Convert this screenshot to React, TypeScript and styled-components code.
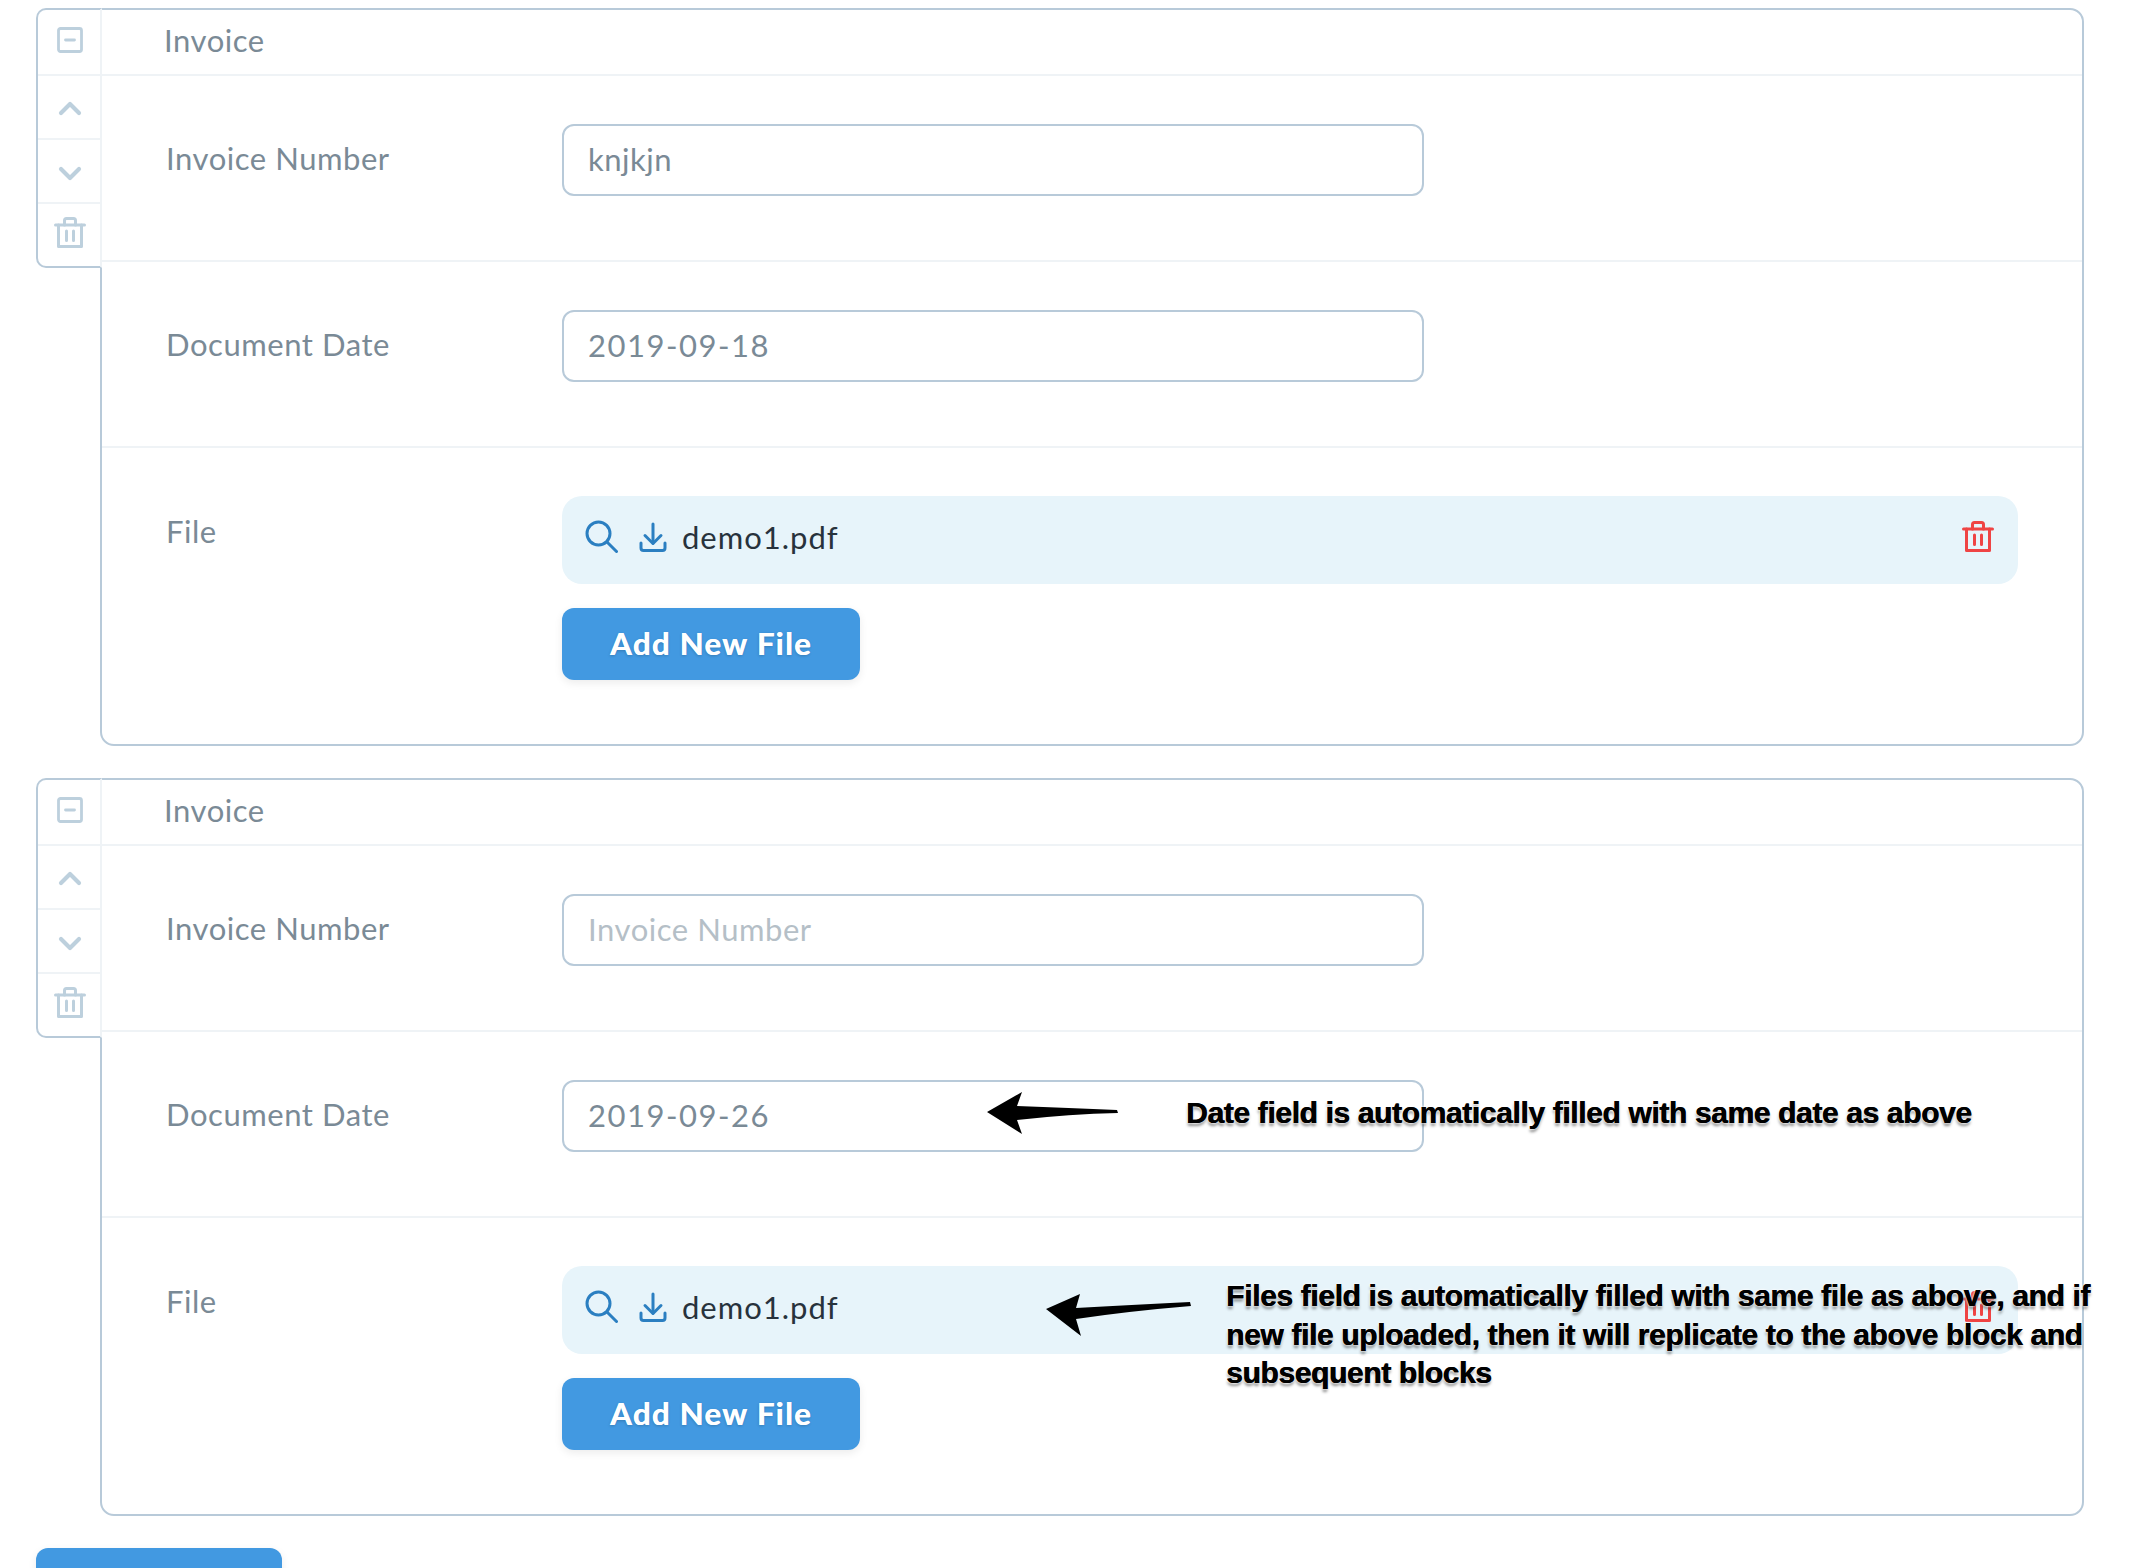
import React from "react";
import styled, { createGlobalStyle } from "styled-components";

const Global = createGlobalStyle`
  html, body { margin: 0; padding: 0; background: #fff; height: 100%; overflow: hidden; }
  body { font-family: "Lato", "Open Sans", sans-serif; }
`;

const Page = styled.div`
  position: relative;
  width: 2132px;
  height: 1568px;
  overflow: hidden;
  box-sizing: border-box;
  padding: 8px 48px 0 36px;
  display: flex;
  flex-direction: column;
  gap: 32px;
`;

const Block = styled.section`
  display: flex;
  align-items: flex-start;
  height: 738px;
`;

const Sidebar = styled.aside`
  position: relative;
  z-index: 1;
  flex: none;
  width: 66px;
  height: 260px;
  margin-right: -2px;
  box-sizing: border-box;
  background: #fff;
  border: 2px solid #b8cad9;
  border-right-color: #eff3f6;
  border-radius: 10px 0 0 10px;
  display: flex;
  flex-direction: column;
`;

const SideCell = styled.button<{ $h: number; $up?: number; $down?: number; $last?: boolean }>`
  height: ${(p) => p.$h}px;
  flex: none;
  box-sizing: border-box;
  padding: ${(p) => p.$down ?? 0}px 0 ${(p) => p.$up ?? 0}px 2px;
  background: none;
  border: 0;
  border-bottom: ${(p) => (p.$last ? "0" : "2px solid #eff3f6")};
  display: flex;
  align-items: center;
  justify-content: center;
  color: #bdd0dd;
`;

const Panel = styled.div`
  flex: 1;
  height: 738px;
  box-sizing: border-box;
  border: 2px solid #b8cad9;
  border-radius: 0 14px 14px 14px;
  display: flex;
  flex-direction: column;
`;

const Header = styled.div`
  height: 66px;
  flex: none;
  box-sizing: border-box;
  border-bottom: 2px solid #eff3f6;
  padding: 0 0 4px 62px;
  display: flex;
  align-items: center;
  font-size: 31px;
  letter-spacing: 0.55px;
  color: #7a8a96;
`;

const Row = styled.div<{ $last?: boolean }>`
  display: flex;
  box-sizing: border-box;
  height: ${(p) => (p.$last ? "auto" : "186px")};
  flex: ${(p) => (p.$last ? "1" : "none")};
  padding: 48px 64px 0 64px;
  border-bottom: ${(p) => (p.$last ? "0" : "2px solid #eff3f6")};
`;

const Label = styled.label`
  flex: none;
  width: 396px;
  height: 68px;
  line-height: 68px;
  font-size: 31px;
  color: #7a8a96;
  letter-spacing: 0.55px;
`;

const FileLabel = styled(Label)`
  height: 70px;
  line-height: 70px;
`;

const TextInput = styled.input<{ $tracking: number }>`
  width: 862px;
  height: 72px;
  box-sizing: border-box;
  padding: 0 24px 3px;
  background: #fff;
  border: 2px solid #b8cad9;
  border-radius: 12px;
  font: 400 31px "Lato", sans-serif;
  letter-spacing: ${(p) => p.$tracking}px;
  color: #7a8a96;
  outline: none;
  &::placeholder { color: #b5bfc7; opacity: 1; letter-spacing: 0.55px; }
`;

const FileColumn = styled.div`
  flex: 1;
  display: flex;
  flex-direction: column;
  align-items: flex-start;
  gap: 24px;
`;

const FileItem = styled.div`
  align-self: stretch;
  height: 88px;
  box-sizing: border-box;
  padding: 0 24px 7px 23px;
  background: #e7f4fa;
  border-radius: 20px;
  display: flex;
  align-items: center;
  color: #2b7fc1;
`;

const FileName = styled.span`
  margin-left: 15px;
  font-size: 31px;
  color: #27323c;
  letter-spacing: 1px;
`;

const DeleteIcon = styled.span`
  margin-left: auto;
  display: flex;
  color: #ef4444;
`;

const SpacedIcon = styled.span`
  margin-left: 21px;
  display: flex;
`;

const PrimaryButton = styled.button`
  width: 298px;
  height: 72px;
  padding: 0 0 3px;
  background: #4299e1;
  border: 0;
  border-radius: 12px;
  box-shadow: 0 3px 8px rgba(0, 0, 0, 0.08);
  font: 700 31px "Lato", sans-serif;
  letter-spacing: 1.4px;
  color: #fff;
  text-shadow: 0.5px 0 0 #fff, 0 1px 3px rgba(0, 0, 0, 0.2);
`;

const AddBlock = styled(PrimaryButton)`
  flex: none;
  width: 246px;
`;

const Note = styled.p<{ $x: number; $y: number }>`
  position: absolute;
  z-index: 2;
  left: ${(p) => p.$x}px;
  top: ${(p) => p.$y}px;
  margin: 0;
  white-space: pre;
  font: 700 30px/38.5px "Liberation Sans", Arial, sans-serif;
  letter-spacing: -0.37px;
  color: #000;
  text-shadow: 0.6px 0 0 #000, 0 0 3px #fff, 0 0 2px #fff, 0 3px 3px rgba(0, 0, 0, 0.45);
`;

const ArrowMark = styled.svg`
  position: absolute;
  z-index: 2;
  left: 0;
  top: 0;
  pointer-events: none;
`;

const Trash = ({ size = 32 }: { size?: number }) => (
  <svg width={size} height={size} viewBox="0 0 32 32" fill="none" stroke="currentColor" strokeWidth="3" strokeLinecap="round" strokeLinejoin="round">
    <path d="M1.5 8h29" />
    <path d="M4.5 8v21.5h23V8" />
    <path d="M10.5 8V3.5q0-2 2-2h7q2 0 2 2V8" />
    <path d="M12.5 14v9.5M19.5 14v9.5" />
  </svg>
);

const MinusSquare = () => (
  <svg width="26" height="26" viewBox="0 0 26 26" fill="none" stroke="currentColor" strokeWidth="2.8" strokeLinecap="round" strokeLinejoin="round">
    <rect x="1.5" y="1.5" width="23" height="23" rx="2" />
    <path d="M8.5 13h9" />
  </svg>
);

const Chevron = ({ up }: { up?: boolean }) => (
  <svg width="24" height="16" viewBox="0 0 24 16" fill="none" stroke="currentColor" strokeWidth="4.2" strokeLinecap="round" strokeLinejoin="round">
    <path d={up ? "M3 12l9-9 9 9" : "M3 4l9 9 9-9"} />
  </svg>
);

const Search = () => (
  <svg width="33" height="33" viewBox="0 0 33 33" fill="none" stroke="currentColor" strokeWidth="3" strokeLinecap="round" strokeLinejoin="round">
    <circle cx="13.5" cy="13.5" r="11.5" />
    <path d="M22 22l9.5 9.5" />
  </svg>
);

const Download = () => (
  <svg width="28" height="30" viewBox="0 0 28 30" fill="none" stroke="currentColor" strokeWidth="3" strokeLinecap="round" strokeLinejoin="round">
    <path d="M14 2v19" />
    <path d="M6 13.5l8 8 8-8" />
    <path d="M2 21v5q0 2.5 2.5 2.5h19q2.5 0 2.5-2.5v-5" />
  </svg>
);

type Props = { number: string; date: string };

const InvoiceBlock = ({ number, date }: Props) => (
  <Block>
    <Sidebar>
      <SideCell $h={66} $up={4}><MinusSquare /></SideCell>
      <SideCell $h={64} $down={3}><Chevron up /></SideCell>
      <SideCell $h={64} $down={3}><Chevron /></SideCell>
      <SideCell $h={62} $last $up={4}><Trash /></SideCell>
    </Sidebar>
    <Panel>
      <Header>Invoice</Header>
      <Row>
        <Label>Invoice Number</Label>
        <TextInput readOnly value={number} $tracking={0.5} placeholder="Invoice Number" />
      </Row>
      <Row>
        <Label>Document Date</Label>
        <TextInput readOnly value={date} $tracking={1.5} />
      </Row>
      <Row $last>
        <FileLabel>File</FileLabel>
        <FileColumn>
          <FileItem>
            <Search />
            <SpacedIcon><Download /></SpacedIcon>
            <FileName>demo1.pdf</FileName>
            <DeleteIcon><Trash /></DeleteIcon>
          </FileItem>
          <PrimaryButton>Add New File</PrimaryButton>
        </FileColumn>
      </Row>
    </Panel>
  </Block>
);

export default function App() {
  return (
    <Page>
      <Global />
      <InvoiceBlock number="knjkjn" date="2019-09-18" />
      <InvoiceBlock number="" date="2019-09-26" />
      <AddBlock aria-label="Add block" />
      <Note $x={1186} $y={1094}>Date field is automatically filled with same date as above</Note>
      <Note $x={1226} $y={1277}>{"Files field is automatically filled with same file as above, and if\nnew file uploaded, then it will replicate to the above block and\nsubsequent blocks"}</Note>
      <ArrowMark width="2132" height="1568" viewBox="0 0 2132 1568" fill="#000" aria-hidden="true">
        <path d="M987 1112 L1022 1092 L1017 1106 Q1070 1108 1117 1110 L1118 1113 Q1070 1114 1017 1120 L1022 1134 Z" />
        <path d="M1046 1309 L1080 1294 L1076 1308 Q1130 1305 1190 1302 L1191 1306 Q1130 1311 1076 1319 L1081 1336 Z" />
      </ArrowMark>
    </Page>
  );
}
